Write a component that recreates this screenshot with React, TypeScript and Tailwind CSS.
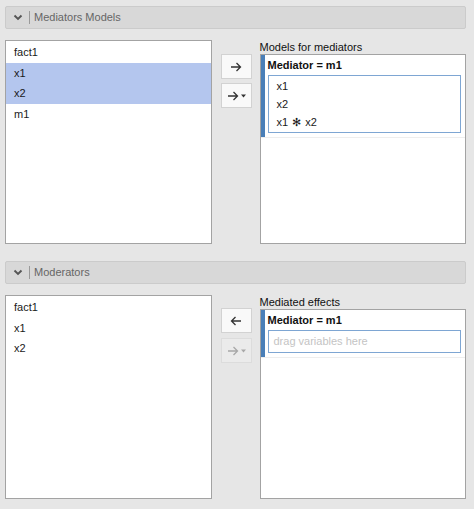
import React from "react";

const font = { fontFamily: '"Liberation Sans", Arial, sans-serif' };

function Chevron() {
    return (
        <svg width="10" height="7" viewBox="0 0 10 7" className="text-[#555]">
            <path d="M1.5 1.5 L5 5 L8.5 1.5" fill="none" stroke="currentColor" strokeWidth="1.9" />
        </svg>
    );
}

function Header({title}: {title: string}) {
    return (
        <div className="flex h-[23px] items-center rounded-[2px] border border-[#cbcbcb] bg-[#d8d8d8] pl-[7px]">
            <Chevron />
            <div className="ml-[6px] h-[13px] w-px bg-[#9a9a9a]" />
            <span className="ml-[4px] text-[11px] text-[#666]">{title}</span>
        </div>
    );
}

function Arrow({dir, disabled, drop}: {dir: "right" | "left"; disabled?: boolean; drop?: boolean}) {
    const color = disabled ? "#a8a8a8" : "#333";
    return (
        <div className="flex items-center gap-[2px]">
            <svg width="12" height="10" viewBox="0 0 12 10">
                {dir === "right" ? (
                    <path d="M1 5 H10.5 M6.5 1 L10.5 5 L6.5 9" fill="none" stroke={color} strokeWidth="1.3" />
                ) : (
                    <path d="M11 5 H1.5 M5.5 1 L1.5 5 L5.5 9" fill="none" stroke={color} strokeWidth="1.3" />
                )}
            </svg>
            {drop && (
                <svg width="5" height="4" viewBox="0 0 5 4">
                    <path d="M0 0.5 H5 L2.5 3.5 Z" fill={color} />
                </svg>
            )}
        </div>
    );
}

function ArrowButton({dir, disabled, drop}: {dir: "right" | "left"; disabled?: boolean; drop?: boolean}) {
    return (
        <div
            className={
                disabled
                    ? "flex h-[25px] w-[31px] items-center justify-center border border-[#dcdcdc] bg-[#ebebeb]"
                    : "flex h-[25px] w-[31px] items-center justify-center border border-[#d2d2d2] bg-[#f9f9f9]"
            }
        >
            <Arrow dir={dir} disabled={disabled} drop={drop} />
        </div>
    );
}

function VarList({items, selected}: {items: string[]; selected: string[]}) {
    return (
        <div className="h-[204px] w-[207px] border border-[#a3a3a3] bg-white pt-px">
            {items.map((item) => (
                <div
                    key={item}
                    className={
                        selected.includes(item)
                            ? "flex h-[20.5px] items-center bg-[#b4c6ee] pl-[8px] text-[11px] text-[#1a1a1a]"
                            : "flex h-[20.5px] items-center pl-[8px] text-[11px] text-[#1a1a1a]"
                    }
                >
                    {item}
                </div>
            ))}
        </div>
    );
}

function MediatorBox({label, children}: {label: string; children: React.ReactNode}) {
    return (
        <div className="flex w-[207px] flex-col">
            <div className="h-[14px] text-[11px] leading-[14px] text-[#111]">{label}</div>
            <div className="h-[190px] border border-[#a3a3a3] bg-white">
                <div className="flex border-b border-[#eeeeee]">
                    <div className="w-[4px] bg-[#4a7fb8]" />
                    <div className="flex-1 pb-[4px] pl-[3px] pr-[4px]">
                        <div className="flex h-[20px] items-center text-[11px] font-bold text-[#111]">Mediator = m1</div>
                        {children}
                    </div>
                </div>
            </div>
        </div>
    );
}

export default function App() {
    return (
        <div className="h-[509px] w-[474px] bg-[#e6e6e6] pt-[6px] pl-[5px] pr-[8px]" style={font}>
            <Header title="Mediators Models" />
            <div className="mt-[11px] flex">
                <VarList items={["fact1", "x1", "x2", "m1"]} selected={["x1", "x2"]} />
                <div className="ml-[9px] mr-[8px] mt-[14px] flex flex-col gap-[4px]">
                    <ArrowButton dir="right" />
                    <ArrowButton dir="right" drop />
                </div>
                <MediatorBox label="Models for mediators">
                    <div className="border border-[#7ea6d3] py-[1px] pl-[8px]">
                        {["x1", "x2"].map((t) => (
                            <div key={t} className="flex h-[18px] items-center text-[11px] text-[#1a1a1a]">{t}</div>
                        ))}
                        <div className="flex h-[18px] items-center text-[11px] text-[#1a1a1a]">
                            x1 <span className="mx-[4px] text-[11px]">✻</span> x2
                        </div>
                    </div>
                </MediatorBox>
            </div>
            <div className="mt-[17px]">
                <Header title="Moderators" />
            </div>
            <div className="mt-[11px] flex">
                <VarList items={["fact1", "x1", "x2"]} selected={[]} />
                <div className="ml-[9px] mr-[8px] mt-[13px] flex flex-col gap-[5px]">
                    <ArrowButton dir="left" />
                    <ArrowButton dir="right" drop disabled />
                </div>
                <MediatorBox label="Mediated effects">
                    <div className="flex h-[23px] items-center border border-[#7ea6d3] pl-[5px] text-[11px] text-[#c4c4c4]">
                        drag variables here
                    </div>
                </MediatorBox>
            </div>
        </div>
    );
}
